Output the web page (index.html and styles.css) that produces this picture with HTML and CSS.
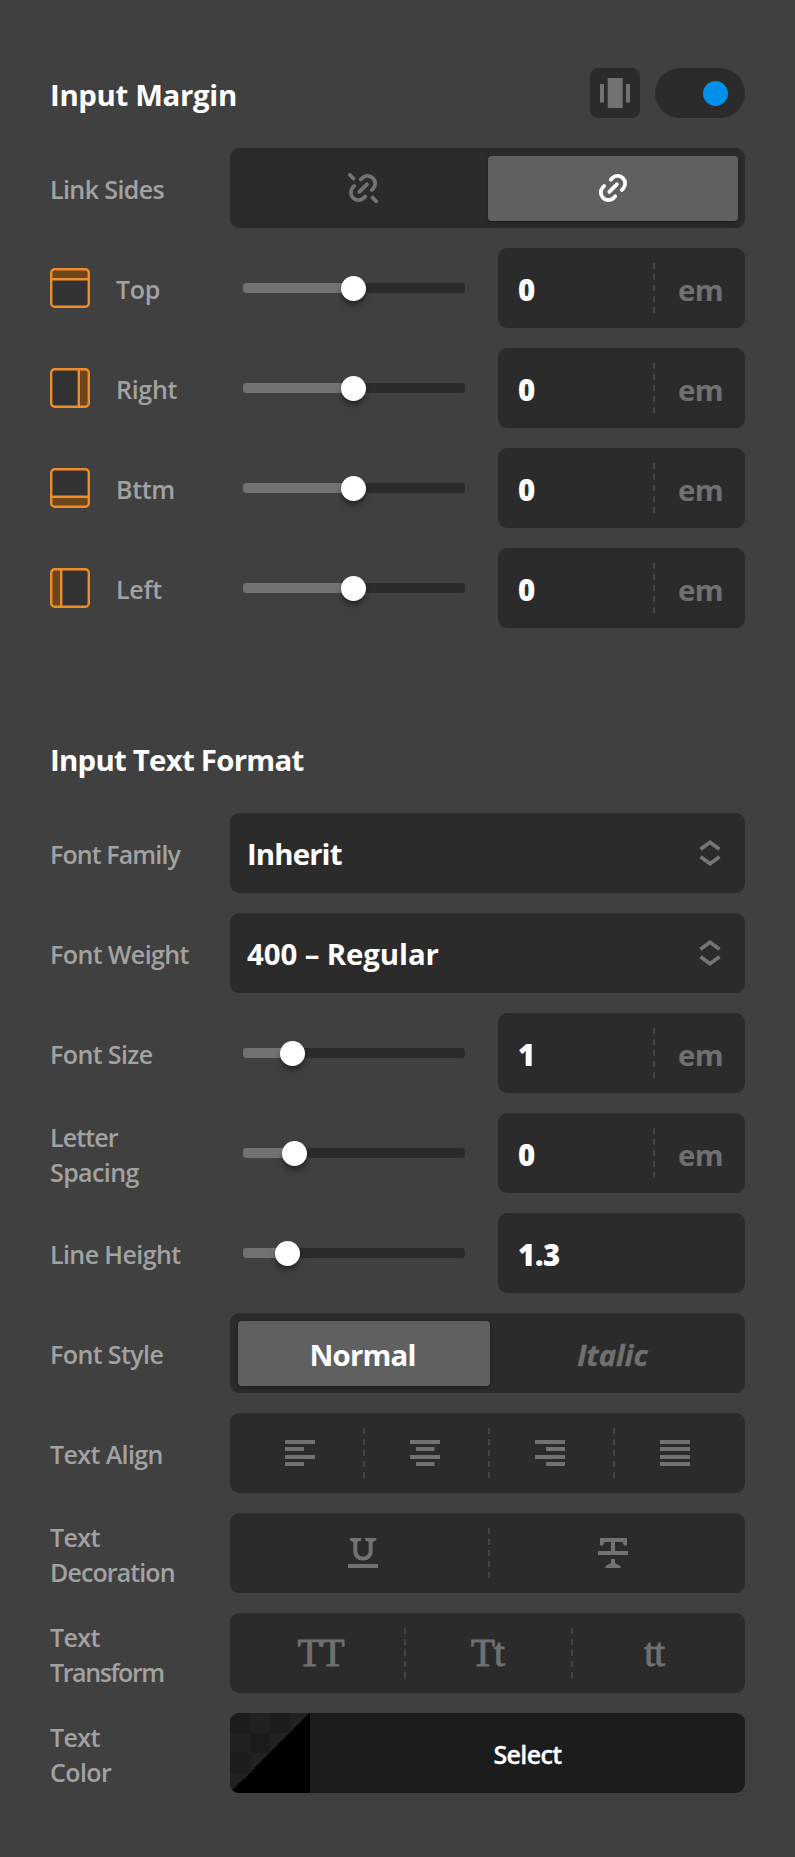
FILE: index.html
```html
<!DOCTYPE html>
<html lang="en">
<head>
<meta charset="utf-8">
<title>Input controls</title>
<link rel="stylesheet" href="styles.css">
</head>
<body>
<svg class="defs" width="0" height="0">
  <symbol id="link" viewBox="0 0 30 30"><path d="M12.8 6.7 14.7 4.7A7.6 7.6 0 0 1 25.4 15.4L23.8 17M17.2 23.3 15.3 25.3A7.6 7.6 0 0 1 4.6 14.6L6.2 13M11.3 18.9 18.9 11.3"/></symbol>
  <symbol id="unlink" viewBox="0 0 30 30"><path d="M12.8 6.4 14.7 4.7A7.6 7.6 0 0 1 25.4 15.4L23.8 17M17.2 23.6 15.3 25.3A7.6 7.6 0 0 1 4.6 14.6L6.2 13M11.3 18.9 18.9 11.3M1.9 1.9 5.5 5.5M24.5 24.5 28.1 28.1"/></symbol>
  <symbol id="updown" viewBox="0 0 22 26"><path d="M1.5 9.3 11 2.3 20.5 9.3M1.5 16.7 11 23.7 20.5 16.7"/></symbol>
  <symbol id="edge" viewBox="0 0 40 40"><rect x="1.2" y="1.2" width="37.6" height="37.6" rx="3.5" fill="#333"/><path d="M2 2h36v9H2z" fill="#6f451b"/><path d="M1 11.200h38" stroke="#f08d2b" stroke-width="2.400"/><rect x="1.200" y="1.200" width="37.600" height="37.600" rx="3.500" fill="none" stroke="#f08d2b" stroke-width="2.400"/></symbol>
</svg>
<main class="panel">
  <section class="group">
    <header class="head">
      <h2 class="title t-margin">Input Margin</h2>
      <button class="preview" aria-label="Preview"><svg width="30" height="30" viewBox="0 0 30 30"><path d="M0 6h4v18.5H0zM7.7 0h15v30h-15zM26 6h4v18.5h-4z"/></svg></button>
      <span class="toggle"><i class="dot"></i></span>
    </header>
    <div class="row"><label class="label">Link Sides</label>
      <div class="box seg"><div class="cell"><svg class="ico dim"><use href="#unlink"/></svg></div><div class="cell on"><svg class="ico lit"><use href="#link"/></svg></div></div></div>
    <div class="row"><label class="label side"><svg class="edge"><use href="#edge"/></svg>Top</label>
      <div class="slider"><i class="fill" style="width:50.2%"></i><i class="thumb"></i></div><div class="box num"><b class="val">0</b><span class="unit">em</span></div></div>
    <div class="row"><label class="label side"><svg class="edge right"><use href="#edge"/></svg>Right</label>
      <div class="slider"><i class="fill" style="width:50.2%"></i><i class="thumb"></i></div><div class="box num"><b class="val">0</b><span class="unit">em</span></div></div>
    <div class="row"><label class="label side"><svg class="edge bottom"><use href="#edge"/></svg>Bttm</label>
      <div class="slider"><i class="fill" style="width:50.2%"></i><i class="thumb"></i></div><div class="box num"><b class="val">0</b><span class="unit">em</span></div></div>
    <div class="row"><label class="label side"><svg class="edge left"><use href="#edge"/></svg>Left</label>
      <div class="slider"><i class="fill" style="width:50.2%"></i><i class="thumb"></i></div><div class="box num"><b class="val">0</b><span class="unit">em</span></div></div>
  </section>

  <section class="group">
    <header class="head"><h2 class="title">Input Text Format</h2></header>
    <div class="row"><label class="label snug">Font Family</label>
      <div class="box select family"><span>Inherit</span><svg class="arrows"><use href="#updown"/></svg></div></div>
    <div class="row"><label class="label">Font Weight</label>
      <div class="box select"><span>400 – Regular</span><svg class="arrows"><use href="#updown"/></svg></div></div>
    <div class="row"><label class="label">Font Size</label>
      <div class="slider"><i class="fill" style="width:22.5%"></i><i class="thumb"></i></div><div class="box num"><b class="val">1</b><span class="unit">em</span></div></div>
    <div class="row"><label class="label"><span class="snug">Letter</span><br>Spacing</label>
      <div class="slider"><i class="fill" style="width:23.3%"></i><i class="thumb"></i></div><div class="box num"><b class="val">0</b><span class="unit">em</span></div></div>
    <div class="row"><label class="label">Line Height</label>
      <div class="slider"><i class="fill" style="width:20.2%"></i><i class="thumb"></i></div><div class="box num"><b class="val">1.3</b></div></div>
    <div class="row"><label class="label">Font Style</label>
      <div class="box seg"><div class="cell on wide">Normal</div><div class="cell italic">Italic</div></div></div>
    <div class="row"><label class="label">Text Align</label>
      <div class="box seg split">
        <div class="cell"><svg class="bars" viewBox="0 0 30 26"><path d="M0 0h30v4H0zM0 7h19v4H0zM0 15h30v4H0zM0 22h19v4H0z"/></svg></div>
        <div class="cell"><svg class="bars" viewBox="0 0 30 26"><path d="M0 0h30v4H0zM6 7h18.5v4H6zM0 15h30v4H0zM6 22h18.5v4H6z"/></svg></div>
        <div class="cell"><svg class="bars" viewBox="0 0 30 26"><path d="M0 0h30v4H0zM11 7h19v4H11zM0 15h30v4H0zM11 22h19v4H11z"/></svg></div>
        <div class="cell"><svg class="bars" viewBox="0 0 30 26"><path d="M0 0h30v4H0zM0 7h30v4H0zM0 15h30v4H0zM0 22h30v4H0z"/></svg></div>
      </div></div>
    <div class="row"><label class="label">Text<br><span class="snug">Decoration</span></label>
      <div class="box seg split">
        <div class="cell"><svg class="deco" viewBox="0 0 30 30"><path class="line" d="M7.3 1V12.5C7.3 18 10.5 20.6 15 20.6S22.7 18 22.7 12.5V1"/><path d="M2 0h11.3v2.2L9.3 4H5L2 2.2zM17 0h11.3v2.2L25 4h-4.3L17 2.2zM0 26h30v4H0z"/></svg></div>
        <div class="cell"><svg class="deco" viewBox="0 0 30 30"><path d="M2 0h27v7.5h-3L24.5 4H17v9h13v4H0v-4h13V4H6.5L5 7.5H2zM13 21h4v4l5.5 3v2h-15v-2l5.5-3z"/></svg></div>
      </div></div>
    <div class="row"><label class="label">Text<br><span class="tight">Transform</span></label>
      <div class="box seg split serif"><div class="cell">TT</div><div class="cell">Tt</div><div class="cell">tt</div></div></div>
    <div class="row"><label class="label">Text<br>Color</label>
      <div class="box color"><span class="swatch"></span><span class="pick">Select</span></div></div>
  </section>
</main>
</body>
</html>
```

FILE: styles.css
```css
* { box-sizing: border-box; }
body { margin: 0; background: #404040; font-family: "Open Sans", "Noto Sans", sans-serif; }
.defs { display: block; }
.panel { width: 795px; height: 1857px; padding: 68px 50px 0; display: flex; flex-direction: column; gap: 105px; }
.group { display: flex; flex-direction: column; gap: 20px; }
.head { height: 50px; margin-bottom: 10px; display: flex; align-items: center; gap: 15px; }
.title { margin: 0; flex: 1; color: #fff; font-size: 29.4px; line-height: 40px; font-weight: 700; letter-spacing: -0.75px; padding-top: 3px; }
.t-margin { letter-spacing: -0.35px; }
.preview { width: 50px; height: 50px; border: 0; border-radius: 8px; background: #2b2b2b; padding: 10px; }
.preview svg { display: block; fill: #727272; }
.toggle { width: 90px; height: 50px; border-radius: 25px; background: #2b2b2b; display: flex; align-items: center; justify-content: flex-end; padding: 1px 17px 0 0; }
.dot { width: 25px; height: 25px; border-radius: 50%; background: #008fe9; }

.row { height: 80px; display: flex; align-items: center; }
.label { width: 180px; flex: none; color: #a2a2a2; font-size: 25px; line-height: 35px; font-weight: 600; letter-spacing: -0.6px; padding-top: 3px; }
.snug { letter-spacing: -0.9px; }
.tight { letter-spacing: -1.4px; }
.side { display: flex; align-items: center; gap: 26px; letter-spacing: -0.3px; }
.edge { width: 40px; height: 40px; margin-top: -3px; flex: none; }
.edge.right { transform: rotate(90deg); }
.edge.bottom { transform: rotate(180deg); }
.edge.left { transform: rotate(-90deg); }

.slider { width: 222px; height: 10px; margin: 0 33px 0 13px; flex: none; border-radius: 3px; background: #2b2b2b; display: flex; align-items: center; }
.fill { height: 10px; border-radius: 3px 0 0 3px; background: #727272; }
.thumb { width: 25px; height: 25px; margin: 1px 0 0 -13px; border-radius: 50%; background: #fff; box-shadow: 0 5px 6px -1px rgba(0,0,0,.45); }

.box { flex: 1; height: 80px; border-radius: 9px; background: #2b2b2b; color: #fff; font-size: 29.4px; font-weight: 700; display: flex; align-items: center; }
.num { padding-left: 20px; }
.val { flex: 1; padding-top: 3px; letter-spacing: -0.3px; }
.unit { width: 92px; height: 50px; display: flex; align-items: center; justify-content: center; color: #707070; padding: 3px 0 0 3px; letter-spacing: -0.5px;
  background: repeating-linear-gradient(#444 0 6px, transparent 6px 11px) 0 0 / 2px 50px no-repeat; }
.select { padding: 0 24px 0 17px; justify-content: space-between; letter-spacing: -0.1px; }
.family { letter-spacing: -0.9px; }
.select span { padding-top: 2px; }
.arrows { width: 22px; height: 26px; fill: none; stroke: #757575; stroke-width: 3.6; }

.seg { padding: 0 7.5px; }
.cell { flex: 1; height: 65px; display: flex; align-items: center; justify-content: center; color: #707070; letter-spacing: -0.8px; }
.on { background: #606060; border-radius: 4px; color: #fff; box-shadow: 0 2px 5px rgba(0,0,0,.25); }
.wide { margin-right: -2px; padding: 3px 2px 0 0; }
.italic { font-style: italic; padding-top: 3px; letter-spacing: 0; -webkit-text-stroke: 0.4px #707070; }
.ico { width: 30px; height: 30px; fill: none; stroke-width: 3.8; stroke-linecap: round; }
.dim { stroke: #727272; }
.lit { stroke: #fff; }
.split .cell { height: 50px; }
.split .cell + .cell { background: repeating-linear-gradient(#444 0 6px, transparent 6px 11px) 0 0 / 2px 50px no-repeat; }
.bars { width: 30px; height: 26px; fill: #727272; }
.deco { width: 30px; height: 30px; fill: #727272; }
.line { fill: none; stroke: #727272; stroke-width: 4; }
.serif { font-family: "Liberation Serif", serif; font-size: 39px; font-weight: 400; -webkit-text-stroke: 1px #707070; }
.serif .cell { padding-bottom: 2px; }
.color { background: #1c1c1c; overflow: hidden; }
.swatch { width: 80px; height: 80px; background:
  linear-gradient(135deg, transparent 50%, #000 50%),
  repeating-conic-gradient(#1c1c1c 0 25%, #212121 0 50%) 0 20px / 40px 40px; }
.pick { flex: 1; text-align: center; font-size: 25px; font-weight: 600; letter-spacing: -0.6px; padding-top: 2px; -webkit-text-stroke: 0.3px #fff; }
```
